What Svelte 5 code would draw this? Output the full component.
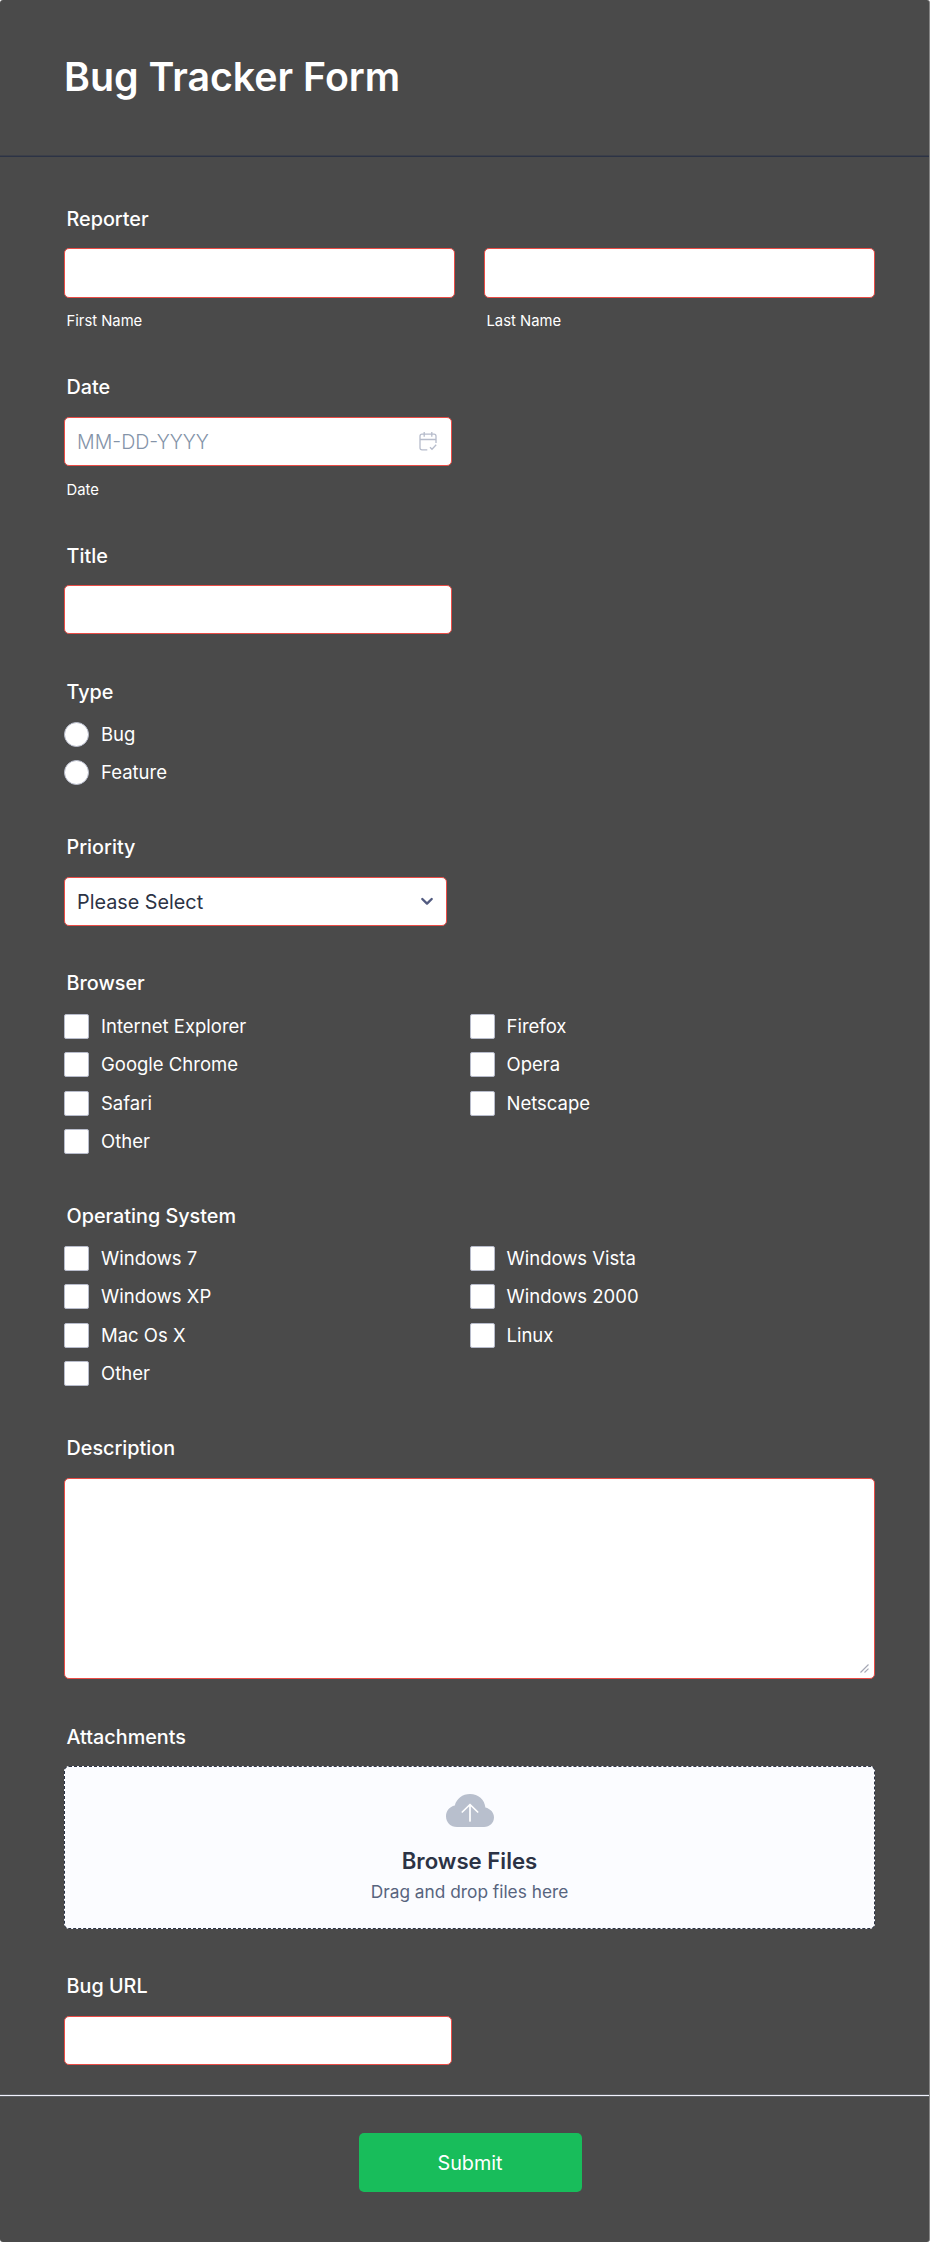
<script>
  const types = ['Bug', 'Feature'];
  const browsers = ['Internet Explorer', 'Firefox', 'Google Chrome', 'Opera', 'Safari', 'Netscape', 'Other'];
  const systems = ['Windows 7', 'Windows Vista', 'Windows XP', 'Windows 2000', 'Mac Os X', 'Linux', 'Other'];
</script>

<form class="form">
  <header>
    <h1>Bug Tracker Form</h1>
  </header>

  <div class="fields">
    <section>
      <h2>Reporter</h2>
      <div class="names">
        <label><input class="box" type="text" /><span class="sub">First Name</span></label>
        <label><input class="box" type="text" /><span class="sub">Last Name</span></label>
      </div>
    </section>

    <section>
      <h2>Date</h2>
      <div class="box date">
        <input type="text" placeholder="MM-DD-YYYY" />
        <svg width="18" height="19" viewBox="0 0 18 19" fill="none" stroke="#b6bccb" stroke-width="1.3">
          <path d="M8.3 17.8H3Q1 17.8 1 15.8V4.2Q1 2.2 3 2.2H15Q17 2.2 17 4.2V11M1 7.5H17M5.2 0V4.7M12.8 0V4.7M11 15.2L13 17.2L17.2 12.8" />
        </svg>
      </div>
      <span class="sub">Date</span>
    </section>

    <section>
      <h2>Title</h2>
      <input class="box half" type="text" />
    </section>

    <section>
      <h2>Type</h2>
      <div class="options single">
        {#each types as name}
          <label><span class="mark round"></span>{name}</label>
        {/each}
      </div>
    </section>

    <section>
      <h2>Priority</h2>
      <div class="box select">
        <span>Please Select</span>
        <svg width="14" height="9" viewBox="0 0 14 9" fill="none" stroke="#525b80" stroke-width="2.4" stroke-linecap="round" stroke-linejoin="round">
          <path d="M2.3 2L7 6.6L11.7 2" />
        </svg>
      </div>
    </section>

    <section>
      <h2>Browser</h2>
      <div class="options roomy">
        {#each browsers as name}
          <label><span class="mark"></span>{name}</label>
        {/each}
      </div>
    </section>

    <section>
      <h2>Operating System</h2>
      <div class="options">
        {#each systems as name}
          <label><span class="mark"></span>{name}</label>
        {/each}
      </div>
    </section>

    <section>
      <h2>Description</h2>
      <div class="box area">
        <svg width="9" height="9" viewBox="0 0 9 9" fill="none" stroke="#a5a8b5" stroke-width="1.1">
          <path d="M.5 8.5L8.5 .5M4.5 8.5L8.5 4.7" />
        </svg>
      </div>
    </section>

    <section class="attachments">
      <h2>Attachments</h2>
      <div class="drop">
        <svg width="48" height="33" viewBox="0 0 48 33">
          <path fill="#b8bfcd" d="M11 33C4.5 33 0 28.4 0 22.3C0 16.8 3.6 12.6 8.8 11.5C10.4 4.8 16.5 0 24 0C32.3 0 38.7 5.6 39.4 13.5C44.4 14.8 48 18.5 48 23.3C48 28.9 43.7 33 38 33Z" />
          <path fill="none" stroke="#fff" stroke-width="1.7" stroke-linecap="round" stroke-linejoin="round" d="M24 27V11M16.3 18L24 10.5L31.7 18" />
        </svg>
        <strong>Browse Files</strong>
        <span>Drag and drop files here</span>
      </div>
    </section>

    <section>
      <h2>Bug URL</h2>
      <input class="box half" type="text" />
    </section>
  </div>

  <footer>
    <button type="button">Submit</button>
  </footer>
</form>

<style>
  :global(body) {
    margin: 0;
    background: #fff;
  }
  .form,
  .form * {
    box-sizing: border-box;
  }
  .form {
    width: 930px;
    height: 2242px;
    display: flex;
    flex-direction: column;
    background: #4a4a4a;
    border-right: 1px solid #858585;
    border-radius: 3px;
    color: #fff;
    font-family: Inter, "Liberation Sans", sans-serif;
    overflow: hidden;
  }
  header {
    height: 157px;
    flex: none;
    padding: 52px 64px 0;
    border-bottom: 1px solid #2c3345;
    box-shadow: inset 0 -1px #3c3f48;
  }
  h1 {
    margin: 0;
    font-size: 39.3px;
    line-height: 49px;
    font-weight: 600;
  }
  .fields {
    display: grid;
    grid-template-rows: 168.5px 168.5px 136.5px 155px 136px 233px 232.2px 288.8px 249.5px 72px;
    height: 1937px;
    flex: none;
    padding: 49.5px 54px 0 64px;
  }
  h2 {
    margin: 0 0 17.5px;
    padding-left: 2.5px;
    font-size: 19.8px;
    line-height: 24px;
    font-weight: 500;
  }
  .attachments h2 {
    margin-bottom: 17px;
  }
  .box {
    display: block;
    width: 100%;
    height: 49px;
    margin: 0;
    padding: 0 12px;
    background: #fff;
    border: 1px solid #ea4c46;
    border-radius: 5px;
    outline: none;
    font: inherit;
  }
  .names {
    display: grid;
    grid-template-columns: 391px 391px;
    gap: 29px;
  }
  .names .box {
    height: 50px;
  }
  .names .sub {
    margin-top: 14px;
  }
  .half {
    width: 388px;
  }
  .sub {
    display: block;
    margin-top: 15px;
    padding-left: 2.5px;
    font-size: 14.8px;
    line-height: 18px;
  }
  .date {
    display: flex;
    align-items: center;
    justify-content: space-between;
    width: 388px;
    padding: 0 14px 0 12px;
  }
  .date input {
    width: 260px;
    padding: 1px 0 0;
    border: 0;
    outline: none;
    background: none;
    font: 300 19.6px/24px Inter, "Liberation Sans", sans-serif;
  }
  .date input::placeholder {
    color: #8493a8;
    opacity: 1;
  }
  .select {
    display: flex;
    align-items: center;
    justify-content: space-between;
    width: 383px;
    color: #2c3345;
    font-size: 19.8px;
  }
  .select span {
    padding-top: 1px;
  }
  .options {
    display: grid;
    grid-template-columns: 405.5px 405.5px;
    grid-auto-rows: 38.4px;
    margin-top: 18px;
  }
  .options.single {
    grid-template-columns: 1fr;
  }
  .options.roomy {
    margin-top: 19px;
  }
  .options label {
    display: flex;
    align-items: center;
    height: 25px;
    gap: 12px;
    font-size: 18.5px;
    line-height: 25px;
  }
  .mark {
    width: 25px;
    height: 25px;
    flex: none;
    background: #fff;
    border: 1px solid #b8bccb;
    border-radius: 2px;
  }
  .mark.round {
    border-radius: 50%;
  }
  .area {
    display: flex;
    align-items: flex-end;
    justify-content: flex-end;
    width: 811px;
    height: 201px;
    padding: 0 5px 5px 0;
  }
  .drop {
    display: flex;
    flex-direction: column;
    align-items: center;
    width: 811px;
    height: 163px;
    padding-top: 27px;
    background: #fbfcff;
    border: 1px dashed #2c3345;
    border-radius: 5px;
    color: #2c3345;
  }
  .drop strong {
    margin-top: 20px;
    font-size: 22.2px;
    line-height: 28px;
    font-weight: 600;
  }
  .drop span {
    margin-top: 6px;
    color: #57647e;
    font-size: 17.3px;
    line-height: 22px;
  }
  footer {
    display: flex;
    justify-content: center;
    align-items: flex-start;
    height: 148px;
    flex: none;
    padding: 37px 0 0 11px;
    border-top: 1px solid #5c5f62;
    box-shadow: inset 0 1px #f3f3fe, inset 0 2px #5c5f62;
  }
  button {
    width: 223px;
    height: 59px;
    margin-top: 1px;
    padding: 0;
    border: 0;
    border-radius: 5px;
    background: #18bd5b;
    color: #fff;
    font: 400 19.8px/24px Inter, "Liberation Sans", sans-serif;
  }
</style>
